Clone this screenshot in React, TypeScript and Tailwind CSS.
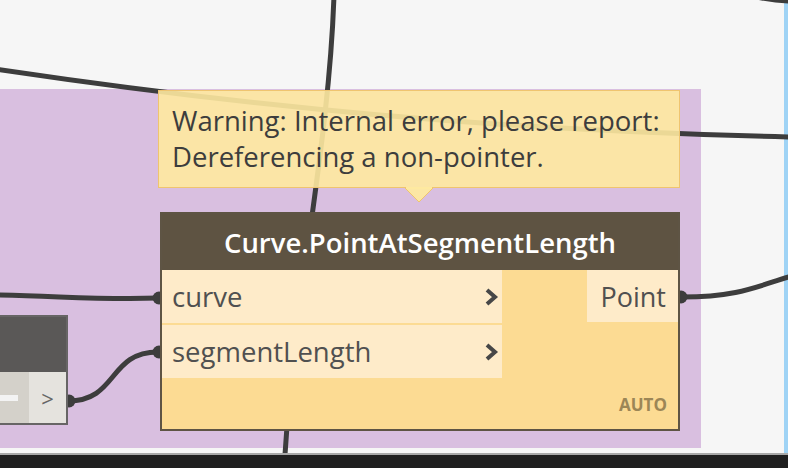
import React from 'react';

const wires = [
  'M -5 69 C 250 107, 500 131, 792 137',
  'M 334 -5 C 329 150, 293 300, 284 472',
  'M 748 -5 Q 772 1, 792 1',
  'M -5 295 C 60 296, 100 300, 158 298',
  'M 68 401 C 118 401, 108 352, 158 352',
  'M 682 297 C 740 297, 760 285, 792 276',
];

const ports = [
  [159, 298],
  [159, 352],
  [681, 297],
  [69, 401],
];

function Chevron() {
  return (
    <svg width="16" height="18" viewBox="0 0 16 18" className="shrink-0">
      <polyline points="4,2 12,9 4,16" fill="none" stroke="#474747" strokeWidth="4" strokeLinejoin="miter" />
    </svg>
  );
}

function InputRow({ label }: { label: string }) {
  return (
    <div className="flex h-[53px] items-center justify-between bg-[#feebc9] pl-[10px] pr-[3px]">
      <span className="text-[27.5px] leading-none text-[#505050]">{label}</span>
      <Chevron />
    </div>
  );
}

export default function App() {
  return (
    <div className="flex h-[468px] w-[788px] flex-col overflow-hidden font-['Open_Sans',sans-serif]">
      <div className="relative h-[453px] overflow-hidden bg-[#f6f6f6]">
        {/* group */}
        <div className="absolute left-0 top-[89px] h-[359px] w-[701px] bg-[#d9bfe0]" />
        {/* right edge highlight */}
        <div className="absolute bottom-0 right-0 top-0 w-[4px] bg-[#9fd3f5]" />

        <svg className="absolute inset-0" width="788" height="453">
          {wires.map((d) => (
            <path key={d} d={d} fill="none" stroke="#3d3d3d" strokeWidth="5" strokeLinecap="round" />
          ))}
          {ports.map(([x, y]) => (
            <circle key={`${x}-${y}`} cx={x} cy={y} r="6.5" fill="#3d3d3d" />
          ))}
        </svg>

        {/* number slider node, cut off at the left */}
        <div className="absolute left-[-2px] top-[315px] flex h-[110px] w-[70px] flex-col border-2 border-[#676565]">
          <div className="h-[55px] bg-[#5a5857]" />
          <div className="flex flex-1">
            <div className="flex w-[29px] items-center bg-[#d4d1ca]">
              <div className="h-[6px] w-[18px] bg-[#f3f3f3]" />
            </div>
            <div className="flex flex-1 items-center justify-center bg-[#e5e3de] text-[22px] leading-none text-[#666]">&gt;</div>
          </div>
        </div>

        {/* node */}
        <div className="absolute left-[160px] top-[212px] flex h-[219px] w-[520px] flex-col border-2 border-[#5e5444]">
          <div className="flex h-[56px] items-center justify-center bg-[#5e5342] pt-[2px] text-[27.5px] font-semibold text-white">
            Curve.PointAtSegmentLength
          </div>
          <div className="flex flex-1 flex-col bg-[#fcdb93]">
            <div className="flex justify-between">
              <div className="flex w-[340px] flex-col gap-[2px]">
                <InputRow label="curve" />
                <InputRow label="segmentLength" />
              </div>
              <div className="flex h-[52px] w-[91px] items-center justify-end bg-[#feebc9] pr-[12px] text-[27px] leading-none text-[#505050]">
                Point
              </div>
            </div>
            <div className="mt-auto flex justify-end pb-[16px] pr-[11px] text-[17px] font-bold leading-none text-[#9c8656]">AUTO</div>
          </div>
        </div>

        {/* warning bubble */}
        <div className="absolute left-[158px] top-[90px] h-[98px] w-[522px] border border-[#efc46f] bg-[#fee9a0]/90 pl-[13px] pt-[12px] text-[27.5px] leading-[36px] text-[#3d3d3d]">
          <div>Warning: Internal error, please report:</div>
          <div>Dereferencing a non-pointer.</div>
        </div>
        <svg className="absolute left-[404px] top-[187px]" width="30" height="16" viewBox="0 0 30 16">
          <polygon points="1,1 15,15 29,1" fill="#fee9a0" fillOpacity="0.95" stroke="#efc46f" strokeWidth="1" />
          <rect x="2" y="0" width="26" height="2" fill="#fee9a0" />
        </svg>
      </div>
      <div className="h-[2px] bg-[#a8a8a8]" />
      <div className="flex-1 bg-[#1f1f1f]" />
    </div>
  );
}
